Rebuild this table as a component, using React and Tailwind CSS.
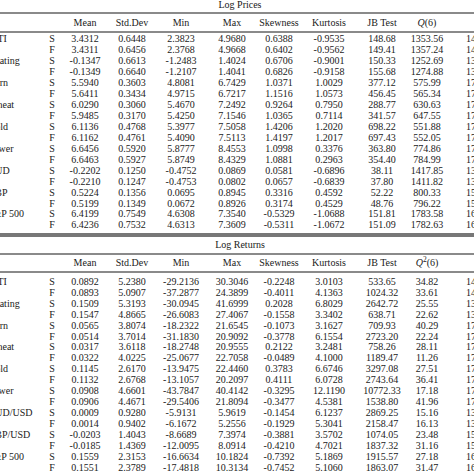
import React from "react";

const GRID =
  "grid grid-cols-[52px_24px_42px_52px_46px_56px_38px_62px_44px_46px_60px]";

const names1 = ["WTI", "Heating", "Corn", "Wheat", "Gold", "Power", "AUD", "GBP", "S&P 500"];
const names2 = ["WTI", "Heating", "Corn", "Wheat", "Gold", "Power", "AUD/USD", "GBP/USD", "S&P 500"];

const lastCol = [
  "1437.21", "1441.08", "1329.54", "1336.12", "1712.45", "1708.33", "1721.90", "1718.64",
  "1735.27", "1733.80", "1726.41", "1729.15", "1348.72", "1345.60", "1532.18", "1529.47",
  "1654.39", "1652.81",
];

const prices = [
  ["3.4312", "0.6448", "2.3823", "4.9680", "0.6388", "-0.9535", "148.68", "1353.56"],
  ["3.4311", "0.6456", "2.3768", "4.9668", "0.6402", "-0.9562", "149.41", "1357.24"],
  ["-0.1347", "0.6613", "-1.2483", "1.4024", "0.6706", "-0.9001", "150.33", "1252.69"],
  ["-0.1349", "0.6640", "-1.2107", "1.4041", "0.6826", "-0.9158", "155.68", "1274.88"],
  ["5.5940", "0.3603", "4.8081", "6.7429", "1.0371", "1.0029", "377.12", "575.99"],
  ["5.6411", "0.3434", "4.9715", "6.7217", "1.1516", "1.0573", "456.45", "565.34"],
  ["6.0290", "0.3060", "5.4670", "7.2492", "0.9264", "0.7950", "288.77", "630.63"],
  ["5.9485", "0.3170", "5.4250", "7.1546", "1.0365", "0.7114", "341.57", "647.55"],
  ["6.1136", "0.4768", "5.3977", "7.5058", "1.4206", "1.2020", "698.22", "551.88"],
  ["6.1162", "0.4761", "5.4090", "7.5113", "1.4197", "1.2017", "697.43", "552.05"],
  ["6.6456", "0.5920", "5.8777", "8.4553", "1.0998", "0.3376", "363.80", "774.86"],
  ["6.6463", "0.5927", "5.8749", "8.4329", "1.0881", "0.2963", "354.40", "784.99"],
  ["-0.2202", "0.1250", "-0.4752", "0.0869", "0.0581", "-0.6896", "38.11", "1417.85"],
  ["-0.2210", "0.1247", "-0.4753", "0.0802", "0.0657", "-0.6839", "37.80", "1411.82"],
  ["0.5224", "0.1356", "0.0695", "0.8945", "0.3316", "0.4592", "52.22", "800.33"],
  ["0.5199", "0.1349", "0.0672", "0.8926", "0.3174", "0.4529", "48.76", "796.22"],
  ["6.4199", "0.7549", "4.6308", "7.3540", "-0.5329", "-1.0688", "151.81", "1783.58"],
  ["6.4236", "0.7532", "4.6313", "7.3609", "-0.5311", "-1.0672", "151.09", "1782.63"],
];

const returns = [
  ["0.0892", "5.2380", "-29.2136", "30.3046", "-0.2248", "3.0103", "533.65", "34.82"],
  ["0.0893", "5.0907", "-37.2877", "24.3899", "-0.4011", "4.1363", "1024.32", "33.61"],
  ["0.1509", "5.3193", "-30.0945", "41.6999", "0.2028", "6.8029", "2642.72", "25.55"],
  ["0.1547", "4.8665", "-26.6083", "27.4067", "-0.1558", "3.3402", "638.71", "22.62"],
  ["0.0565", "3.8074", "-18.2322", "21.6545", "-0.1073", "3.1627", "709.93", "40.29"],
  ["0.0514", "3.7014", "-31.1830", "20.9092", "-0.3778", "6.1554", "2723.20", "22.24"],
  ["0.0317", "3.6118", "-18.2748", "20.9555", "0.2122", "3.2481", "758.26", "28.11"],
  ["0.0322", "4.0225", "-25.0677", "22.7058", "-0.0489", "4.1000", "1189.47", "11.26"],
  ["0.1145", "2.6170", "-13.9475", "22.4460", "0.3783", "6.6746", "3297.08", "27.51"],
  ["0.1132", "2.6768", "-13.1057", "20.2097", "0.4111", "6.0728", "2743.64", "36.41"],
  ["0.0908", "4.6601", "-43.7847", "40.4142", "-0.3295", "12.1190", "10772.33", "17.18"],
  ["0.0906", "4.4671", "-29.5406", "21.8094", "-0.3477", "4.5381", "1538.80", "41.96"],
  ["0.0009", "0.9280", "-5.9131", "5.9619", "-0.1454", "6.1237", "2869.25", "15.16"],
  ["0.0014", "0.9402", "-6.1672", "5.2556", "-0.1929", "5.3041", "2158.47", "16.13"],
  ["-0.0203", "1.4043", "-8.6689", "7.3974", "-0.3881", "3.5702", "1074.05", "23.48"],
  ["-0.0185", "1.4369", "-12.0095", "8.0914", "-0.4210", "4.7021", "1837.32", "31.16"],
  ["0.1559", "2.3153", "-16.6634", "10.1824", "-0.7392", "5.1869", "1915.57", "27.18"],
  ["0.1551", "2.3789", "-17.4818", "10.3134", "-0.7452", "5.1060", "1863.07", "31.47"],
];

function Cell({ children }) {
  return <div className="flex justify-center whitespace-nowrap">{children}</div>;
}

function Header({ q, h }) {
  return (
    <div className={`${GRID} items-center ${h}`}>
      <div />
      <div />
      <Cell>Mean</Cell>
      <Cell>Std.Dev</Cell>
      <Cell>Min</Cell>
      <Cell>Max</Cell>
      <Cell>Skewness</Cell>
      <Cell>Kurtosis</Cell>
      <Cell>JB Test</Cell>
      <Cell>{q}</Cell>
      <div />
    </div>
  );
}

function Rows({ data, names }) {
  return (
    <div className="flex flex-col">
      {data.map((r, i) => (
        <div key={i} className={`${GRID} items-center h-[10.94px]`}>
          <div className="whitespace-nowrap">{i % 2 === 0 ? names[i / 2] : ""}</div>
          <Cell>{i % 2 === 0 ? "S" : "F"}</Cell>
          {r.map((v, j) => (
            <Cell key={j}>{v}</Cell>
          ))}
          <div className="whitespace-nowrap pl-[16px]">{lastCol[i]}</div>
        </div>
      ))}
    </div>
  );
}

export default function App() {
  return (
    <div
      className="w-[474px] h-[474px] overflow-hidden bg-white text-[#1a1a1a] text-[10px] leading-[10px]"
      style={{ fontFamily: '"Liberation Serif", "Times New Roman", serif' }}
    >
      <div className="ml-[-12px] w-[560px] flex flex-col">
        <div className="h-[12px] w-[504px] text-center leading-[10px]">Log Prices</div>
        <div className="h-[2px] bg-[#8a8a8a]" />
        <Header
          h="h-[17px]"
          q={
            <span>
              <i>Q</i>(6)
            </span>
          }
        />
        <div className="h-[2px] bg-[#8a8a8a]" />
        <div className="h-px" />
        <Rows data={prices} names={names1} />
        <div className="h-[2px]" />
        <div className="h-[4px] bg-[#777]" />
        <div className="h-[16px] w-[504px] flex items-center justify-center">Log Returns</div>
        <div className="h-[2px] bg-[#8a8a8a]" />
        <Header
          h="h-[16px]"
          q={
            <span>
              <i>Q</i>
              <sup>2</sup>(6)
            </span>
          }
        />
        <div className="h-[2px] bg-[#8a8a8a]" />
        <div className="h-[3.5px]" />
        <Rows data={returns} names={names2} />
      </div>
    </div>
  );
}
